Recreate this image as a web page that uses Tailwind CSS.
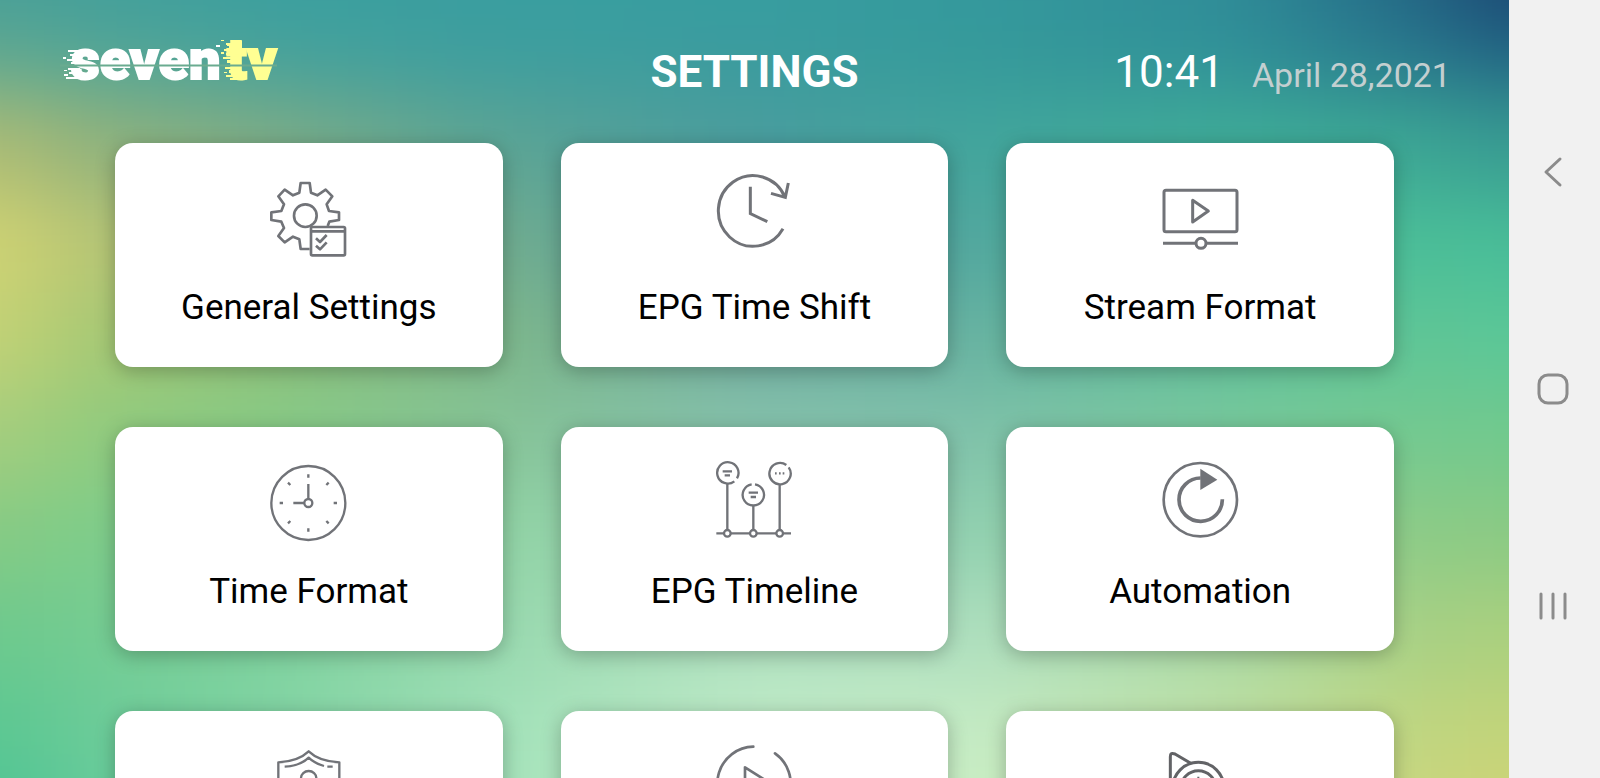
<!DOCTYPE html>
<html lang="en">
<head>
<meta charset="utf-8">
<meta name="viewport" content="width=device-width, initial-scale=1">
<title>Seven TV – Settings</title>
<script src="https://cdn.jsdelivr.net/npm/@tailwindcss/browser@4"></script>
</head>
<body class="flex h-screen overflow-hidden bg-[#f1f1f1] font-['Roboto',sans-serif]">

<div class="relative isolate flex min-w-0 flex-1 flex-col overflow-hidden">
  <!-- Colour-wash background: blurred gradient bands -->
  <div class="absolute -inset-24 -z-10 flex flex-col blur-[36px]" aria-hidden="true">
    <div class="grow-[120] basis-0 bg-[linear-gradient(90deg,#489f98_5.6%,#3b9f9f_22%,#379da0_50%,#34999c_63%,#2f8c98_78%,#236684_89%,#1b4673_94.4%)]"></div>
    <div class="grow-[73] basis-0 bg-[linear-gradient(90deg,#62a98f_5.6%,#55a696_11%,#47a29b_22%,#3f9e9e_33%,#3b9c9e_50%,#369a9b_63%,#319298_78%,#29798d_89%,#236885_94.4%)]"></div>
    <div class="grow-[97] basis-0 bg-[linear-gradient(90deg,#adbc75_5.6%,#93b37b_11%,#7dac86_22%,#5ea593_33%,#4a9c9e_50%,#42a59c_63%,#3fac97_78%,#3ca694_89%,#389a92_94.4%)]"></div>
    <div class="grow-[97] basis-0 bg-[linear-gradient(90deg,#d0d373_5.6%,#bac674_11%,#92b57f_22%,#6eab90_36%,#559f9f_50%,#52a79e_63%,#4bb598_78%,#4bbf98_89%,#48bd98_94.4%)]"></div>
    <div class="grow-[97] basis-0 bg-[linear-gradient(90deg,#c3d276_5.6%,#a7c974_11%,#8dc07b_22%,#7cb68c_36%,#71aca0_50%,#68b3a1_63%,#60bf9b_78%,#60c696_89%,#5bc797_94.4%)]"></div>
    <div class="grow-[97] basis-0 bg-[linear-gradient(90deg,#a5ce7e_5.6%,#90cb7e_11%,#86cb86_22%,#86c399_36%,#87c3ad_50%,#80c2aa_63%,#79c99b_78%,#74c98f_89%,#72c98d_94.4%)]"></div>
    <div class="grow-[97] basis-0 bg-[linear-gradient(90deg,#86cb84_5.6%,#7dcc8a_11%,#80cd94_22%,#92d3a6_36%,#98d2b4_50%,#91d0b0_63%,#8ccd99_78%,#8dcb86_89%,#8bca84_94.4%)]"></div>
    <div class="grow-[97] basis-0 bg-[linear-gradient(90deg,#6dc98d_5.6%,#74cc92_11%,#7fd29e_22%,#9ad9b0_36%,#afe0bf_50%,#addebe_63%,#a8d8a4_78%,#a8d084_89%,#a9d07e_94.4%)]"></div>
    <div class="grow-[97] basis-0 bg-[linear-gradient(90deg,#5bc792_5.6%,#6acb98_11%,#82d4a4_22%,#a4e2ba_36%,#c0ebc8_50%,#c5ebc4_63%,#bfe0a4_78%,#bfd57f_89%,#c2d47a_94.4%)]"></div>
    <div class="grow-[96] basis-0 bg-[linear-gradient(90deg,#4ac395_5.6%,#62ca9a_11%,#84d6a7_22%,#a9e5bd_36%,#c8efcb_50%,#cbefc5_63%,#c5e1a0_78%,#cdd77c_89%,#d2d376_94.4%)]"></div>
  </div>

  <header class="grid h-[143px] shrink-0 grid-cols-3 items-center px-[50px]">
    <svg class="mt-[26px] h-[70px] w-[250px] self-start" viewBox="50 25 250 70" role="img" aria-label="Seven TV">
      <g font-family="Roboto, sans-serif" font-weight="900" stroke-width="2">
        <text x="71" y="78" font-size="56" fill="#fff" stroke="#fff">seven</text>
        <text x="227" y="78" font-size="58" fill="#ffff93" stroke="#ffff93">tv</text>
      </g>
      <g fill="#fff">
        <path d="M68 49h12v2h-12zM63 56h3v2h-3zM70 53h6v2h-6zM67 58h9v2h-9zM71 61h8v2h-8zM64 69h3v1h-3zM68 67h12v2h-12zM64 73h4v2h-4zM69 71h8v2h-8zM66 76h12v2h-12zM216 44h4v2h-4z"/>
      </g>
      <g fill="#ffff93">
        <path d="M231 40h11v8h-13v-3h-2v-3h4zM221 39h3v1h-3zM226 42h6v2h-6zM224 48h9v2h-9zM221 51h3v2h-3zM226 52h9v2h-9zM223 56h11v2h-11zM227 59h8v3h-8zM225 66h9v2h-9zM229 69h6v3h-6zM224 71h3v1h-3zM226 74h9v2h-9zM230 77h8v2h-8z"/>
      </g>
      <path d="M60 64.500h217" stroke="#6aab90" stroke-width="2"/>
    </svg>
    <h1 class="text-center text-[44px] leading-none font-bold text-white">SETTINGS</h1>
    <div class="flex items-baseline justify-end gap-7 pr-2 whitespace-nowrap text-white">
      <time class="text-[44px] leading-none">10:41</time>
      <time class="text-[34px] leading-none text-[#c3cfd0]" datetime="2021-04-28">April 28,2021</time>
    </div>
  </header>

  <main class="grid auto-rows-[224px] grid-cols-3 gap-x-[58px] gap-y-[60px] px-[115px] text-[35px] leading-10 text-black">
    <button class="flex flex-col items-center rounded-[18px] bg-white pt-[27px] shadow-[0_4px_20px_rgba(0,0,0,0.26)]">
      <svg class="h-[100px] w-[110px]" viewBox="-4 0 330 300" fill="none" stroke="#717378" stroke-width="8" stroke-linejoin="round" aria-hidden="true">
        <path d="M163 237h-27l-4-29-19-8-25 17-19-19 17-24-8-19-30-5v-23l30-4 8-20-17-24 19-20 25 17 19-8 4-29h27l4 29 19 8 25-17 20 20-17 24 7 20 30 4v23l-29 5-5 13"/>
        <circle cx="150" cy="137" r="34"/>
        <rect x="167" y="171" width="102" height="85" rx="4"/>
        <path d="M167 184h102M182 205l12 11 20-21M182 227l12 11 20-21"/>
      </svg>
      <span class="mt-[18px]">General Settings</span>
    </button>

    <button class="flex flex-col items-center rounded-[18px] bg-white pt-[27px] shadow-[0_4px_20px_rgba(0,0,0,0.26)]">
      <svg class="h-[100px] w-[110px]" viewBox="-3 15 330 300" fill="none" stroke="#717378" stroke-width="9" aria-hidden="true">
        <path d="M249 191A104 106 0 1 1 255 97M265 54l-9 43-43-12M151 65v81l51 24"/>
      </svg>
      <span class="mt-[18px]">EPG Time Shift</span>
    </button>

    <button class="flex flex-col items-center rounded-[18px] bg-white pt-[27px] shadow-[0_4px_20px_rgba(0,0,0,0.26)]">
      <svg class="h-[100px] w-[110px]" viewBox="0 0 330 300" fill="none" stroke="#717378" stroke-width="9" aria-hidden="true">
        <rect x="57" y="61" width="219" height="124" rx="6"/>
        <path d="M143 91v65l47-33zM54 220h98M184 220h95" stroke-linejoin="round"/>
        <circle cx="168" cy="220" r="15"/>
      </svg>
      <span class="mt-[18px]">Stream Format</span>
    </button>

    <button class="flex flex-col items-center rounded-[18px] bg-white pt-[27px] shadow-[0_4px_20px_rgba(0,0,0,0.26)]">
      <svg class="h-[100px] w-[110px]" viewBox="-4 12 330 300" fill="none" stroke="#717378" stroke-width="7" aria-hidden="true">
        <circle cx="159" cy="159" r="111"/>
        <circle cx="159" cy="159" r="12"/>
        <path d="M159 147v-45M147 159h-33"/>
        <path d="M159 73v10M159 235v10M73 159h10M235 159h10M98 98l7 7M213 213l7 7M98 220l7-7M213 105l7-7" stroke-width="7"/>
      </svg>
      <span class="mt-[18px]">Time Format</span>
    </button>

    <button class="flex flex-col items-center rounded-[18px] bg-white pt-[27px] shadow-[0_4px_20px_rgba(0,0,0,0.26)]">
      <svg class="h-[100px] w-[110px]" viewBox="-3 12 330 300" fill="none" stroke="#717378" stroke-width="7" aria-hidden="true">
        <path d="M103 94A32 32 0 1 1 111 85M165 103A32 32 0 1 1 155 103M266 52A32 32 0 1 1 259 45"/>
        <path d="M82 102v137M160 167v72M239 102v137M49 250h22M93 250h56M171 250h57M250 250h23"/>
        <circle cx="82" cy="250" r="10"/><circle cx="160" cy="250" r="10"/><circle cx="239" cy="250" r="10"/>
        <path d="M68 64h28M74 76h16M146 128h28M152 141h16M225 70h5M237 70h5M248 70h5"/>
      </svg>
      <span class="mt-[18px]">EPG Timeline</span>
    </button>

    <button class="flex flex-col items-center rounded-[18px] bg-white pt-[27px] shadow-[0_4px_20px_rgba(0,0,0,0.26)]">
      <svg class="h-[100px] w-[110px]" viewBox="0 12 330 300" fill="none" stroke="#717378" aria-hidden="true">
        <circle cx="166" cy="149" r="110" stroke-width="8"/>
        <path d="M232 148A65 65 0 1 1 167 84" stroke-width="11"/>
        <path d="M166 56v64l51-31z" fill="#717378" stroke="none"/>
      </svg>
      <span class="mt-[18px]">Automation</span>
    </button>

    <button class="flex flex-col items-center rounded-[18px] bg-white pt-[27px] shadow-[0_4px_20px_rgba(0,0,0,0.26)]" aria-label="Parental Control">
      <svg class="h-[100px] w-[110px]" viewBox="-4 8 330 300" fill="none" stroke="#717378" stroke-width="7" stroke-linejoin="round" aria-hidden="true">
        <path d="M160 48Q129 78 69 81v65q0 75 91 120 92-45 92-120V81q-61-3-92-33z"/>
        <path d="M88 94q46-2 72-27 17 17 46 25M216 94h16M137 150v-22a23 21 0 0 1 46 0v22"/>
        <rect x="125" y="150" width="70" height="54" rx="5"/>
      </svg>
    </button>

    <button class="flex flex-col items-center rounded-[18px] bg-white pt-[27px] shadow-[0_4px_20px_rgba(0,0,0,0.26)]" aria-label="Player Selection">
      <svg class="h-[100px] w-[110px]" viewBox="-2 8 330 300" fill="none" stroke="#717378" stroke-width="8" stroke-linejoin="round" stroke-linecap="round" aria-hidden="true">
        <path d="M161 34A110 110 0 0 0 100 234M226 54A110 110 0 0 1 161 254"/>
        <path d="M136 96v96l76-48z"/>
      </svg>
    </button>

    <button class="flex flex-col items-center rounded-[18px] bg-white pt-[27px] shadow-[0_4px_20px_rgba(0,0,0,0.26)]" aria-label="Player Settings">
      <svg class="h-[100px] w-[110px]" viewBox="2 8 330 300" fill="none" stroke="#626366" stroke-width="9" stroke-linejoin="round" aria-hidden="true">
        <path d="M138 83L92 56q-14-6-14 8v190q0 14 14 6l50-30"/>
        <circle cx="162" cy="158" r="77"/>
        <circle cx="162" cy="158" r="52"/>
        <path d="M162 124v34l24 14" stroke-width="6"/>
      </svg>
    </button>
  </main>
</div>

<nav class="flex w-[91px] shrink-0 flex-col items-center justify-between bg-[#f1f1f1] py-[140px] pr-1" aria-label="System navigation">
  <button class="flex size-16 items-center justify-center" aria-label="Back">
    <svg class="size-8" viewBox="0 0 32 32" fill="none" stroke="#8b8b8b" stroke-width="3" stroke-linecap="round" stroke-linejoin="round"><path d="M23 3L9 16l14 13"/></svg>
  </button>
  <button class="flex size-16 items-center justify-center" aria-label="Home">
    <svg class="size-8" viewBox="0 0 32 32" fill="none" stroke="#8b8b8b" stroke-width="3"><rect x="2" y="2" width="28" height="28" rx="9"/></svg>
  </button>
  <button class="flex size-16 items-center justify-center" aria-label="Recent apps">
    <svg class="size-8" viewBox="0 0 32 32" fill="none" stroke="#8b8b8b" stroke-width="3" stroke-linecap="round"><path d="M4 4v24M16 4v24M28 4v24"/></svg>
  </button>
</nav>
</body>
</html>
